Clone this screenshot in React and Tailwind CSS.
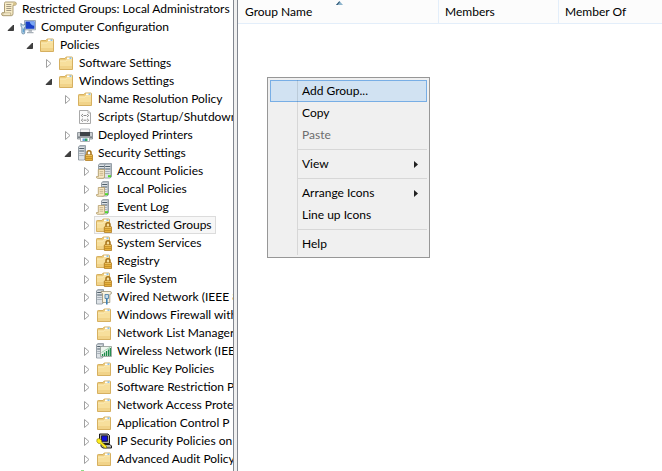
import { useState } from 'react';

const TREE = [
  { level: 0, label: 'Restricted Groups: Local Administrators', icon: 'scroll' },
  { level: 1, label: 'Computer Configuration', icon: 'computer', open: true },
  { level: 2, label: 'Policies', icon: 'folder', open: true },
  { level: 3, label: 'Software Settings', icon: 'folder', open: false },
  { level: 3, label: 'Windows Settings', icon: 'folder', open: true },
  { level: 4, label: 'Name Resolution Policy', icon: 'folder', open: false },
  { level: 4, label: 'Scripts (Startup/Shutdown', icon: 'script' },
  { level: 4, label: 'Deployed Printers', icon: 'printer', open: false },
  { level: 4, label: 'Security Settings', icon: 'serverLock', open: true },
  { level: 5, label: 'Account Policies', icon: 'servers', open: false },
  { level: 5, label: 'Local Policies', icon: 'serverScroll', open: false },
  { level: 5, label: 'Event Log', icon: 'serverScroll', open: false },
  { level: 5, label: 'Restricted Groups', icon: 'folderLock', open: false },
  { level: 5, label: 'System Services', icon: 'folderLock', open: false },
  { level: 5, label: 'Registry', icon: 'folderLock', open: false },
  { level: 5, label: 'File System', icon: 'folderLock', open: false },
  { level: 5, label: 'Wired Network (IEEE 8', icon: 'wired', open: false },
  { level: 5, label: 'Windows Firewall with', icon: 'folder', open: false },
  { level: 5, label: 'Network List Manager', icon: 'folder' },
  { level: 5, label: 'Wireless Network (IEEE', icon: 'wireless', open: false },
  { level: 5, label: 'Public Key Policies', icon: 'folder', open: false },
  { level: 5, label: 'Software Restriction P', icon: 'folder', open: false },
  { level: 5, label: 'Network Access Prote', icon: 'folder', open: false },
  { level: 5, label: 'Application Control P', icon: 'folder', open: false },
  { level: 5, label: 'IP Security Policies on', icon: 'ipsec', open: false },
  { level: 5, label: 'Advanced Audit Policy', icon: 'folder', open: false },
];

const MENU = [
  [
    { label: 'Add Group...', active: true },
    { label: 'Copy' },
    { label: 'Paste', disabled: true },
  ],
  [{ label: 'View', submenu: true }],
  [{ label: 'Arrange Icons', submenu: true }, { label: 'Line up Icons' }],
  [{ label: 'Help' }],
];

const INDENT = 19;

function Folder() {
  return (
    <>
      <path d="M1.5 14.500V4.200q0-.7.7-.7H7l1.200-1.500h5.600q.7 0 .7.700v11.800z" fill="#edcb79" stroke="#d6b060" />
      <path d="M9 2.500h5v1.500H9z" fill="#fff" />
      <path d="M11.500 2.500h2v1.200h-2z" fill="#5fa8dc" />
      <path d="M2 14V5.500h5.500L8.700 4.400H14V14z" fill="#f7df9c" />
      <path d="M2 6h5.700l1.200-1.100H14" fill="none" stroke="#fdf0c4" strokeWidth=".8" />
      <path d="M2 11h12v3H2z" fill="#f1d389" />
    </>
  );
}

function Lock() {
  return (
    <>
      <path d="M10 10V7.800a2 2 0 0 1 4 0V10" fill="none" stroke="#a5731a" strokeWidth="1.500" />
      <rect x="8.300" y="9.800" width="7.400" height="5.800" rx=".5" fill="#e6b13d" stroke="#a8741a" strokeWidth=".8" />
      <path d="M8.800 11.500h6.400M8.800 13.500h6.400" stroke="#c08a22" strokeWidth=".8" />
      <path d="M9 10.600h6" stroke="#f7d77c" strokeWidth=".7" />
    </>
  );
}

function Tower({ x = 0, led }) {
  return (
    <g transform={`translate(${x} 0)`}>
      <path d="M.5 1.800 2 .6h5.500v13.200L6 15H.5z" fill="#b9c1c8" stroke="#858f98" strokeWidth=".8" />
      <path d="M1 2h5v12.500H1z" fill="#dde2e6" />
      <path d="M1.200 3.500h5M1.200 6h5" stroke="#4f5f6b" strokeWidth="1.100" />
      <path d="M1.200 8.500h4.600M1.200 10.500h4.600" stroke="#9aa5ae" strokeWidth=".8" />
      {led && <path d="M4 12.200h3v2H4z" fill="#4fd92c" />}
    </g>
  );
}

function SmallScroll() {
  return (
    <>
      <path d="M2.300 6.500h6.200v7.200q0 1.600-1.400 1.600H1.400q-1 0-1-1.700h1.900z" fill="#f6e7c3" stroke="#b39a68" strokeWidth=".8" />
      <path d="M3.600 8.600h3.600M3.600 10.400h3.600M3.600 12.200h3.600" stroke="#b9a57c" strokeWidth=".7" />
    </>
  );
}

const ICONS = {
  folder: <Folder />,
  folderLock: (
    <>
      <g transform="translate(-1 0)">
        <Folder />
      </g>
      <Lock />
    </>
  ),
  scroll: (
    <>
      <path d="M4.500 1h9q1.800 0 1.800 1.700t-1.900 1.600H12v8.400q0 2-1.700 2H2.200Q.6 14.700.6 13t1.800-1.500h1.100V2.500Q3.500 1 4.500 1z" fill="#f8edc8" stroke="#a4936a" strokeWidth=".9" />
      <path d="M12 4.300V2.700q0-1.500 1.600-1.500t1.600 1.500-1.700 1.600z" fill="#d6c28b" />
      <path d="M5.300 3.500h5M5.300 5.500h5M5.300 7.500h5M5.300 9.500h5" stroke="#9b917b" strokeWidth=".9" />
      <path d="M2.500 11.900h7.300q-.6 1.100.4 2.400H2.400q-1.400-1.200.1-2.400" fill="#fbf3d6" stroke="#a4936a" strokeWidth=".6" />
    </>
  ),
  computer: (
    <>
      <path d="M4.500 1.500h11v9.300h-11z" fill="#dbe2e9" stroke="#93a1b0" strokeWidth=".9" />
      <path d="M5.500 2.500h9v7.300h-9z" fill="#1740c8" />
      <path d="M9.500 2.500h5v4.300q-3.400.2-5-4.300z" fill="#7aa7f4" />
      <path d="M8.500 11h3.500v1.800H8.500zM7 13h6.500v1.300H7z" fill="#a8b0b8" />
      <path d="M1 4.500v2.400q0 1 .9 1.400v5.600q0 1 1.400 1t1.400-1V8.300q.9-.4.9-1.400V4.500L4.300 6H2.300z" fill="#d6e6f2" stroke="#5c86a6" strokeWidth=".9" />
      <path d="M3.300 9.500v4" stroke="#3f93cf" strokeWidth="1" />
    </>
  ),
  script: (
    <>
      <path d="M2.500 1.500h8.500l2.500 2.500v10.500h-11z" fill="#fbfbfb" stroke="#a9a9a9" />
      <path d="M11 1.500V4h2.500" fill="#e6e6e6" stroke="#a9a9a9" strokeWidth=".8" />
      <path d="M6 5 4.300 6.500 6 8M6.500 6.500h3M10 5l1.700 1.500L10 8M6 9.700l-1.700 1.500L6 12.700M6.500 11.200h3M10 9.700l1.700 1.500-1.700 1.500" fill="none" stroke="#6d6d6d" strokeWidth=".8" />
    </>
  ),
  printer: (
    <>
      <path d="M3.500 2h9v4h-9z" fill="#f4f4f4" stroke="#aeb4ba" strokeWidth=".8" />
      <path d="M.5 5.500h15v6.500H.5z" fill="#c9cdd0" stroke="#7e858a" strokeWidth=".8" />
      <path d="M3 5h10v4H3z" fill="#3d4347" />
      <path d="M1 9.500h14v1.300H1z" fill="#6b7277" />
      <path d="M3.500 10.500h9v4h-9z" fill="#fff" stroke="#9aa0a5" strokeWidth=".8" />
      <path d="M5.500 11.500H8v2.500H5.500z" fill="#66a6d8" />
      <path d="M8 11.500h2.500V14H8z" fill="#31a268" />
    </>
  ),
  serverLock: (
    <>
      <g transform="translate(1 0)">
        <Tower />
      </g>
      <Lock />
    </>
  ),
  servers: (
    <>
      <Tower x={2} />
      <Tower x={8} led />
      <SmallScroll />
    </>
  ),
  serverScroll: (
    <>
      <Tower x={5} led />
      <SmallScroll />
    </>
  ),
  wired: (
    <>
      <Tower />
      <path d="M5 2.500h9q1.500 0 1.500 1.500t-1.700 1.300v8.200H6.500V4.500Q5 4.500 5 2.500z" fill="#f8f2e0" stroke="#9c9377" strokeWidth=".8" />
      <path d="M9 5.500h3.500v4H9z" fill="#c6dceb" stroke="#5585a8" strokeWidth=".9" />
      <path d="M10.800 9.500v6" stroke="#3a7fb4" strokeWidth="1.600" />
    </>
  ),
  wireless: (
    <>
      <Tower />
      <path d="M4.500 3.500h11v10h-11z" fill="#eef5ee" stroke="#8f9a92" strokeWidth=".8" />
      <path d="M6.500 13v-2M8.500 13v-3.500M10.500 13V8M12.500 13V6.500M14.300 13V5" stroke="#1d8b49" strokeWidth="1.300" />
      <path d="m5.500 9.500 4-2.500 5-3" fill="none" stroke="#8ccc9e" strokeWidth=".8" />
    </>
  ),
  ipsec: (
    <>
      <path d="M3.500 1h8.500l1.500 1.500v8H5L3.500 9z" fill="#a8a8a8" stroke="#1d1d1d" />
      <path d="M5.500 2.800h6v5.500h-6z" fill="#1010d8" stroke="#111" strokeWidth=".8" />
      <path d="M5 11.500h9l1.500 1.500v2H7l-2-1.500z" fill="#b8b8b8" stroke="#1d1d1d" />
      <path d="M1 6.200 3 5.500l2.500 1.700.2 2L10.500 13v2H8.800L4 10.500l-2-.3L.8 8.500z" fill="#ffee1f" stroke="#8a7a00" strokeWidth=".6" />
    </>
  ),
};

function Icon({ name }) {
  return (
    <svg viewBox="0 0 16 16" className="size-4 shrink-0" aria-hidden="true">
      {ICONS[name]}
    </svg>
  );
}

function Expander({ open, label }) {
  return (
    <button type="button" aria-label={`Toggle ${label}`} className="flex h-[18px] w-[18px] shrink-0 items-center justify-end pr-[3px]">
      <svg viewBox="0 0 8 12" className="h-3 w-2" aria-hidden="true">
        {open ? (
          <path d="M6.500 4v5.500H1z" fill="#404040" stroke="#262626" strokeWidth=".8" />
        ) : (
          <path d="M1.500 2.500v8L6 6.500z" fill="#fff" stroke="#a0a0a0" />
        )}
      </svg>
    </button>
  );
}

function TreeRow({ node, selected, onSelect }) {
  const { level, label, icon, open } = node;
  return (
    <li
      role="treeitem"
      aria-expanded={open}
      aria-selected={selected}
      className="flex h-[18px] items-center whitespace-nowrap"
      style={{ paddingLeft: Math.max(level - 1, 0) * INDENT }}
    >
      {level > 0 && (open === undefined ? <span className="w-[18px] shrink-0" /> : <Expander open={open} label={label} />)}
      <button
        type="button"
        onClick={() => onSelect(label)}
        className={`flex h-[18px] shrink-0 items-center gap-[5px] border-y pl-px ${level > 0 ? 'border-x pr-[3px]' : ''} ${
          selected ? 'border-[#dcdcdc] bg-[#f7f7f7]' : 'border-transparent'
        }`}
      >
        <Icon name={icon} />
        {label}
      </button>
    </li>
  );
}

function ContextMenu() {
  return (
    <div role="menu" className="absolute top-[77px] left-[29px] w-[163px] border border-[#979797] bg-[#f0f0f0] p-0.5">
      {MENU.map((group, i) => (
        <div key={i}>
          {i > 0 && <div className="my-[3px] ml-7 h-px bg-[#d7d7d7]" />}
          {group.map((item) => (
            <button
              key={item.label}
              type="button"
              role="menuitem"
              disabled={item.disabled}
              className={`flex h-[22px] w-full items-center justify-between border pr-2 pl-[31px] disabled:text-[#6d6d6d] ${
                item.active ? 'border-[#78aee5] bg-[#d1e2f2]' : 'border-transparent'
              }`}
            >
              {item.label}
              {item.submenu && (
                <svg viewBox="0 0 4 7" className="h-[7px] w-1" aria-hidden="true">
                  <path d="M0 0v7l4-3.500z" fill="#212121" />
                </svg>
              )}
            </button>
          ))}
        </div>
      ))}
      {/* gutter line between the icon column and the labels */}
      <div className="pointer-events-none absolute inset-y-0.5 left-[29px] w-px bg-black/10" />
    </div>
  );
}

export default function App() {
  const [selected, setSelected] = useState('Restricted Groups');

  return (
    <div className="flex h-screen overflow-hidden bg-white font-['Lato',sans-serif] text-xs text-black">
      <nav className="w-[233px] shrink-0 overflow-hidden" aria-label="Console tree">
        <ul role="tree">
          {TREE.map((node) => (
            <TreeRow key={node.label} node={node} selected={node.label === selected} onSelect={setSelected} />
          ))}
        </ul>
        <div className="mt-0.5 ml-[81px] h-3 w-[3px] bg-[#8fdc85]" />
      </nav>

      <div className="w-[5px] shrink-0 border-x border-[#828790] bg-[#f0f0f0]" />

      <main className="relative min-w-0 flex-1">
        <table className="w-full table-fixed border-separate border-spacing-0 text-left">
          <thead>
            <tr className="h-6 bg-[#fcfcfc]">
              <th className="relative w-[201px] border-r border-b border-[#e3eefa] pl-[7px] font-normal">
                Group Name
                <svg viewBox="0 0 7 4" className="absolute top-px left-[98px] h-1 w-[7px]" aria-hidden="true">
                  <path d="M0 4 3.500 0 7 4z" fill="#8db4cc" />
                  <path d="M0 4 3.500 0v1.500L1.500 4z" fill="#2f5470" />
                </svg>
              </th>
              <th className="w-[120px] border-r border-b border-[#e3eefa] pl-1.5 font-normal">Members</th>
              <th className="border-b border-[#e3eefa] pl-1.5 font-normal">Member Of</th>
            </tr>
          </thead>
        </table>
        <ContextMenu />
      </main>
    </div>
  );
}
